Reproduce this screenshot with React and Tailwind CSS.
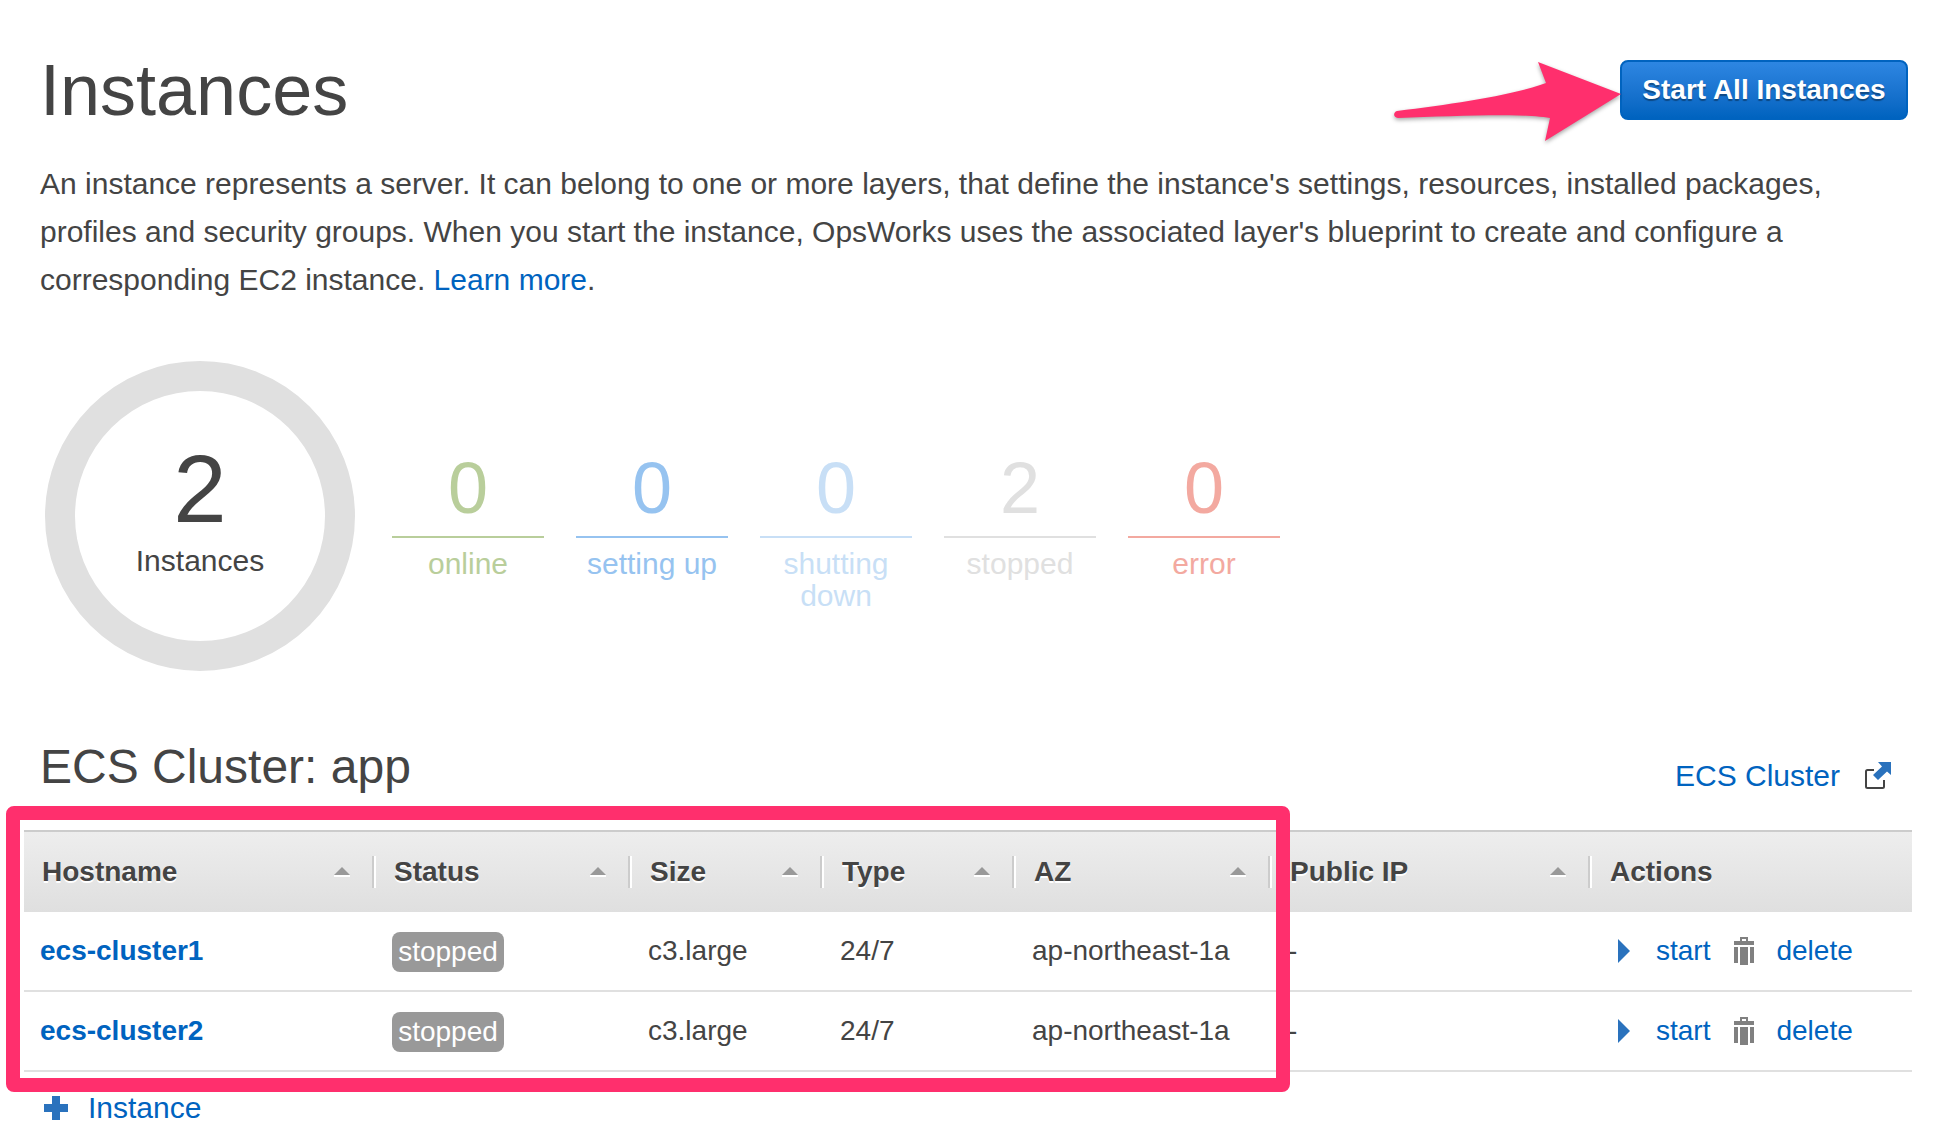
import { useState } from 'react'

const stats = [
  { count: 0, label: 'online', className: 'text-[#b9ce9b] border-[#b9ce9b]' },
  { count: 0, label: 'setting up', className: 'text-[#96c3f0] border-[#96c3f0]' },
  { count: 0, label: 'shutting down', className: 'text-[#c8dff6] border-[#c8dff6]' },
  { count: 2, label: 'stopped', className: 'text-[#e0e0e0] border-[#e0e0e0]' },
  { count: 0, label: 'error', className: 'text-[#f3a9a0] border-[#f3a9a0]' },
]

const columns = [
  { key: 'hostname', label: 'Hostname', width: 'w-[352px]' },
  { key: 'status', label: 'Status', width: 'w-64' },
  { key: 'size', label: 'Size', width: 'w-48' },
  { key: 'type', label: 'Type', width: 'w-48' },
  { key: 'az', label: 'AZ', width: 'w-64' },
  { key: 'ip', label: 'Public IP', width: 'w-80' },
]

const instances = [
  { hostname: 'ecs-cluster1', status: 'stopped', size: 'c3.large', type: '24/7', az: 'ap-northeast-1a', ip: '-' },
  { hostname: 'ecs-cluster2', status: 'stopped', size: 'c3.large', type: '24/7', az: 'ap-northeast-1a', ip: '-' },
]

function PointerArrow() {
  return (
    <svg
      className="w-[226px] h-[60px] shrink-0 overflow-visible drop-shadow-[0_2px_2px_rgba(0,0,0,0.35)]"
      viewBox="0 10 226 60"
      aria-hidden="true"
    >
      <path
        d="M3 61 C58 54 116 46 152 33 L144 12 L227 44 L151 91 L156 68 C130 63 60 66 4 68 C-1 68 -1 62 3 61 Z"
        fill="#ff2f6d"
      />
    </svg>
  )
}

function ExternalIcon() {
  return (
    <svg className="w-7 h-7" viewBox="0 0 28 28" aria-hidden="true">
      <path
        d="M10 8 H3.5 Q2 8 2 9.500 V24.500 Q2 26 3.500 26 H18.500 Q20 26 20 24.500 V18"
        fill="none"
        stroke="#444"
        strokeWidth="2"
      />
      <path d="M14 0 H27 V13 L23 9.500 L14 18 L9 13 L18 4.500 Z" fill="#2a72bd" />
    </svg>
  )
}

function PlayIcon() {
  return (
    <svg className="w-3 h-6" viewBox="0 0 12 24" aria-hidden="true">
      <path d="M0 0 L12 12 L0 24 Z" fill="#2a72bd" />
    </svg>
  )
}

function TrashIcon() {
  return (
    <svg className="w-5 h-7" viewBox="0 0 20 28" fill="#808080" aria-hidden="true">
      <path d="M6 4 V0 H14 V4 H20 V8 H0 V4 Z M8 2 V4 H12 V2 Z" fillRule="evenodd" />
      <path d="M0 10 H4 V26 H0 Z M6 10 H14 V28 H6 Z M16 10 H20 V26 H16 Z" />
    </svg>
  )
}

function PlusIcon() {
  return (
    <svg className="w-6 h-6" viewBox="0 0 24 24" aria-hidden="true">
      <path d="M8 0 H16 V8 H24 V16 H16 V24 H8 V16 H0 V8 H8 Z" fill="#2a72bd" />
    </svg>
  )
}

function SortIcon() {
  return (
    <svg className="w-4 h-[10px]" viewBox="0 0 16 10" aria-hidden="true">
      <path d="M0 8 H16 V10 H0 Z" fill="#fff" />
      <path d="M8 0 L16 8 H0 Z" fill="#999" />
    </svg>
  )
}

function App() {
  const [sort, setSort] = useState(null)

  const rows = sort ? [...instances].sort((a, b) => a[sort].localeCompare(b[sort])) : instances

  return (
    <main className="pl-6 pr-[38px] pt-[54px] text-[#444] bg-white font-['Liberation_Sans',Arial,sans-serif]">
      <header className="flex items-center justify-between pl-4 pr-1">
        <h1 className="text-7xl leading-[72px]">Instances</h1>
        <div className="flex items-center">
          <PointerArrow />
          <button className="w-72 h-[60px] rounded-lg border-2 border-[#0063bf] bg-linear-to-b from-[#2d86e2] to-[#0063bf] text-white text-[28px] font-bold whitespace-nowrap text-shadow-[0_2px_1px_rgba(0,0,0,0.35)]">
            Start All Instances
          </button>
        </div>
      </header>

      <p className="mt-[34px] pl-4 pr-5 text-[30px] leading-[48px]">
        An instance represents a server. It can belong to one or more layers, that define the instance's settings,
        resources, installed packages, profiles and security groups. When you start the instance, OpsWorks uses the
        associated layer's blueprint to create and configure a corresponding EC2 instance.{' '}
        <a href="#learn-more" className="text-[#0063bf]">Learn more</a>.
      </p>

      {/* Instance counts */}
      <section className="mt-[57px] pl-[21px] flex items-start gap-[37px]">
        <div className="size-[310px] shrink-0 rounded-full border-[30px] border-[#e0e0e0] pb-1.5 flex flex-col items-center justify-center">
          <span className="text-8xl leading-[96px]">2</span>
          <span className="text-[30px] leading-[48px]">Instances</span>
        </div>
        <ul className="flex gap-8 pt-20">
          {stats.map(({ count, label, className }) => (
            <li key={label} className={`w-[152px] text-center ${className}`}>
              <div className="border-b-2 text-7xl leading-[95px]">{count}</div>
              <div className="mt-[10px] text-[30px] leading-8">{label}</div>
            </li>
          ))}
        </ul>
      </section>

      {/* Layer */}
      <section className="mt-[72px]">
        <div className="flex items-end justify-between pl-4 pr-5">
          <h2 className="text-5xl leading-[48px]">ECS Cluster: app</h2>
          <a href="#ecs-cluster" className="flex items-center gap-6 text-[30px] leading-[30px] text-[#0063bf]">
            ECS Cluster
            <ExternalIcon />
          </a>
        </div>

        <div className="relative mt-[39px]">
          <table className="w-full table-fixed border-separate border-spacing-0 text-[28px] text-left">
            <thead>
              <tr className="bg-linear-to-b from-[#eee] to-[#dfdfdf]">
                {columns.map(({ key, label, width }) => (
                  <th key={key} className={`${width} h-[82px] p-0 border-t-2 border-[#ccc]`}>
                    <div className="flex items-center">
                      <button
                        onClick={() => setSort(key)}
                        className="flex-1 flex items-center justify-between pl-[18px] pr-[22px] font-bold text-shadow-[0_2px_0_#fff]"
                      >
                        {label}
                        <SortIcon />
                      </button>
                      <span className="w-1 h-8 bg-white border-l-2 border-[#ccc]" />
                    </div>
                  </th>
                ))}
                <th className="h-[82px] py-0 pl-[18px] border-t-2 border-[#ccc] text-shadow-[0_2px_0_#fff]">Actions</th>
              </tr>
            </thead>
            <tbody>
              {rows.map((row) => (
                <tr key={row.hostname} className="*:h-20 *:py-0 *:px-4 *:border-b-2 *:border-[#e0e0e0]">
                  <td>
                    <a href={`#${row.hostname}`} className="font-bold text-[#0063bf]">{row.hostname}</a>
                  </td>
                  <td>
                    <span className="inline-flex items-center justify-center w-28 h-10 rounded-lg bg-[#999] text-white align-middle">
                      {row.status}
                    </span>
                  </td>
                  <td>{row.size}</td>
                  <td>{row.type}</td>
                  <td>{row.az}</td>
                  <td>{row.ip}</td>
                  <td>
                    <div className="flex items-center gap-6 pl-[10px] text-[#0063bf]">
                      <button className="flex items-center gap-[26px]">
                        <PlayIcon />
                        start
                      </button>
                      <button className="flex items-center gap-[22px]">
                        <TrashIcon />
                        delete
                      </button>
                    </div>
                  </td>
                </tr>
              ))}
            </tbody>
          </table>

          {/* Highlight around the instance details */}
          <div className="pointer-events-none absolute -top-6 -bottom-5 -left-[18px] w-[1284px] rounded-lg border-[14px] border-[#ff2f6d]" />
        </div>

        <a href="#add-instance" className="mt-3 ml-5 inline-flex items-center gap-5 text-[30px] leading-[48px] text-[#0063bf]">
          <PlusIcon />
          Instance
        </a>
      </section>
    </main>
  )
}

export default App
